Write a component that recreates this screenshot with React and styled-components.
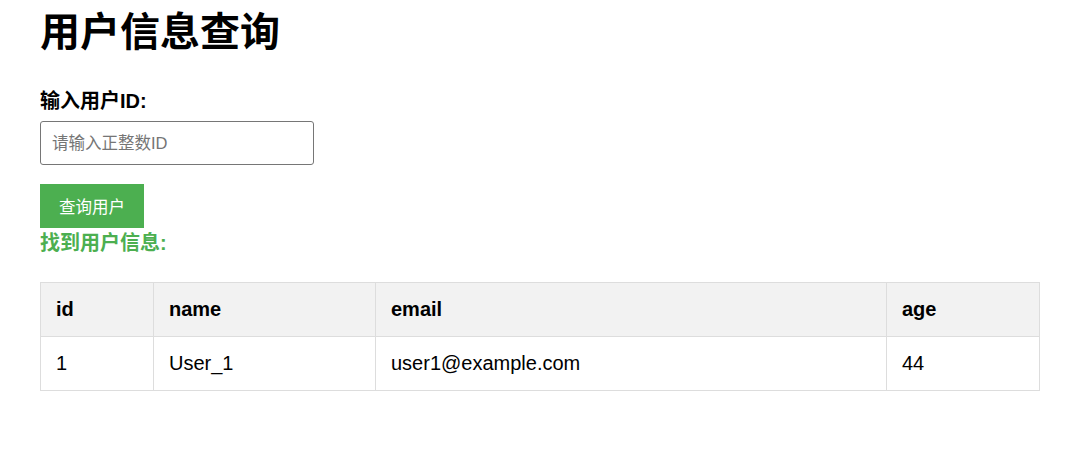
import React from 'react';
import styled, { createGlobalStyle } from 'styled-components';

const GlobalStyle = createGlobalStyle`
  body {
    margin: 0;
    background: #ffffff;
    font-family: "Liberation Sans", Arial, "Noto Sans CJK SC", sans-serif;
    color: #000000;
  }
`;

const Page = styled.div`
  padding: 8px 44px 0 40px;
`;

const Title = styled.h1`
  margin: 0;
  font-size: 40px;
  line-height: 48px;
  font-weight: 700;
`;

const Form = styled.div`
  margin-top: 33px;
  display: flex;
  flex-direction: column;
  align-items: flex-start;
`;

const Label = styled.label`
  font-size: 20px;
  line-height: 24px;
  font-weight: 700;
`;

const Input = styled.input`
  margin-top: 8px;
  box-sizing: border-box;
  width: 274px;
  height: 44px;
  padding: 0 11px;
  border: 1px solid #767676;
  border-radius: 3px;
  font-size: 16.5px;
  font-family: inherit;
  &::placeholder {
    color: #757575;
  }
`;

const Button = styled.button`
  margin-top: 19px;
  box-sizing: border-box;
  width: 104px;
  height: 44px;
  padding: 0;
  border: none;
  background: #4caf50;
  color: #ffffff;
  font-size: 16.5px;
  font-family: inherit;
  cursor: pointer;
`;

const Result = styled.h3`
  margin: 3px 0 0;
  font-size: 20px;
  line-height: 24px;
  font-weight: 700;
  color: #4caf50;
`;

const Table = styled.table`
  margin-top: 27px;
  width: 999px;
  border-collapse: collapse;
  table-layout: fixed;
  font-size: 20px;
`;

const HeadCell = styled.th`
  border: 1px solid #dddddd;
  background: #f2f2f2;
  padding: 15px;
  line-height: 23px;
  text-align: left;
  font-weight: 700;
`;

const Cell = styled.td`
  border: 1px solid #dddddd;
  padding: 15px;
  line-height: 23px;
  text-align: left;
`;

const columns = [
  { key: 'id', width: 113 },
  { key: 'name', width: 222 },
  { key: 'email', width: 511 },
  { key: 'age', width: 153 },
];

const user = { id: 1, name: 'User_1', email: 'user1@example.com', age: 44 };

export default function App() {
  return (
    <Page>
      <GlobalStyle />
      <Title>用户信息查询</Title>
      <Form>
        <Label htmlFor="uid">输入用户ID:</Label>
        <Input id="uid" placeholder="请输入正整数ID" />
        <Button>查询用户</Button>
        <Result>找到用户信息:</Result>
      </Form>
      <Table>
        <colgroup>
          {columns.map((c) => (
            <col key={c.key} style={{ width: c.width }} />
          ))}
        </colgroup>
        <thead>
          <tr>
            {columns.map((c) => (
              <HeadCell key={c.key}>{c.key}</HeadCell>
            ))}
          </tr>
        </thead>
        <tbody>
          <tr>
            {columns.map((c) => (
              <Cell key={c.key}>{user[c.key]}</Cell>
            ))}
          </tr>
        </tbody>
      </Table>
    </Page>
  );
}
